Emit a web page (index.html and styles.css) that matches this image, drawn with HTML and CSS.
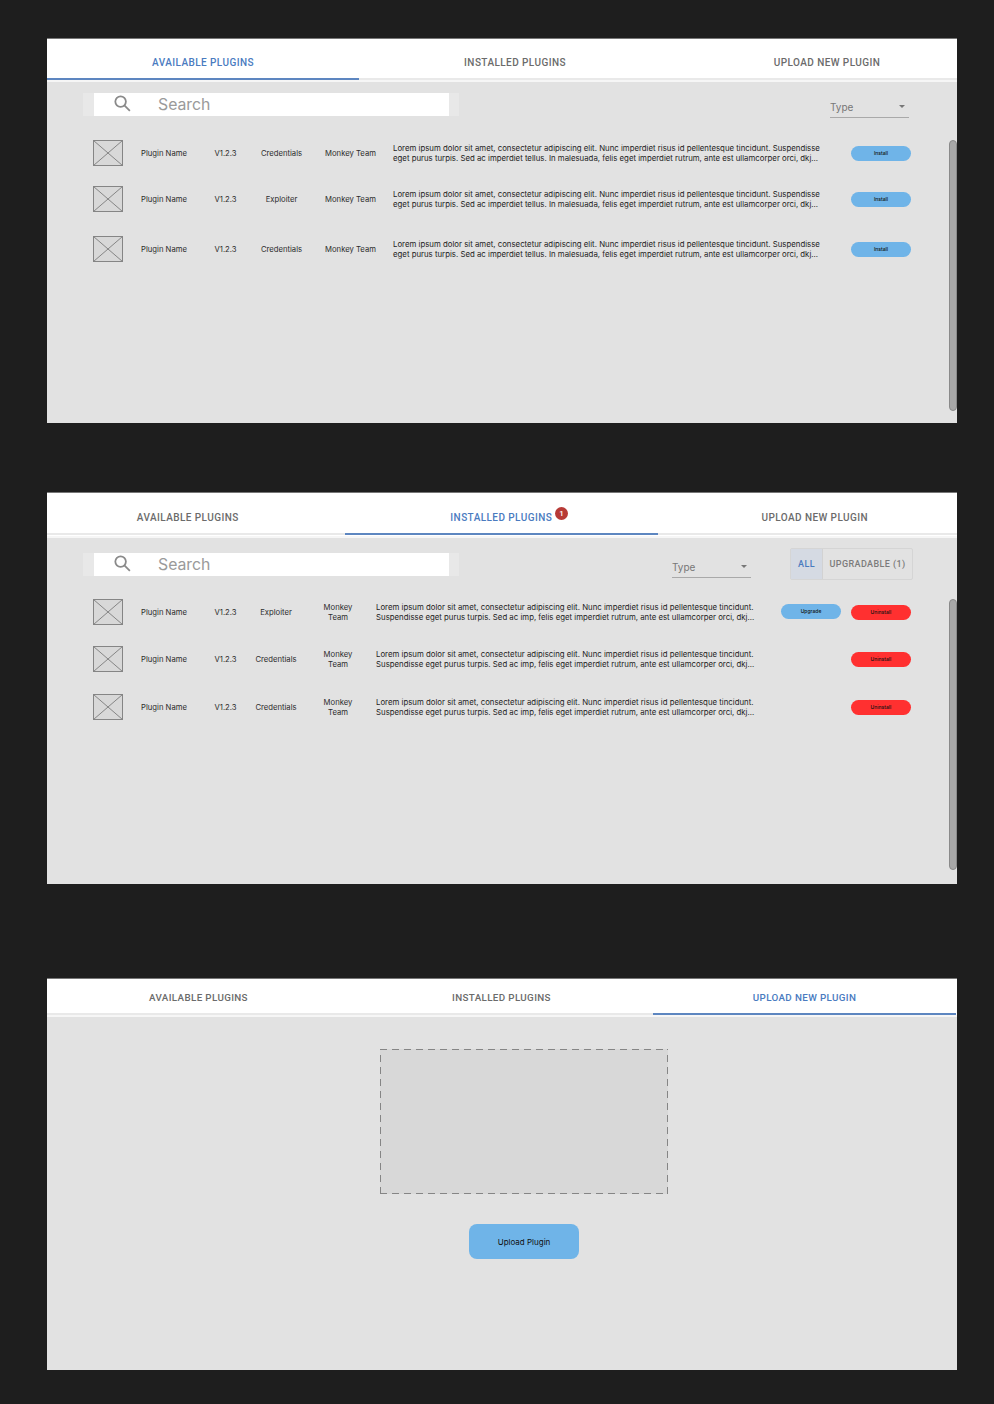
FILE: index.html
```html
<!DOCTYPE html>
<html lang="en">
<head>
<meta charset="utf-8">
<title>Plugins</title>
<link rel="stylesheet" href="styles.css">
</head>
<body>
<section class="panel panel-available">
  <nav class="tabs">
    <a class="tab active">AVAILABLE PLUGINS</a>
    <a class="tab">INSTALLED PLUGINS</a>
    <a class="tab">UPLOAD NEW PLUGIN</a>
  </nav>
  <div class="content">
    <div class="toolbar">
      <div class="search"><div class="search-field">
        <svg class="search-icon" viewBox="0 0 18 18"><circle cx="7" cy="7" r="5.6"/><path d="M11 11l5.8 5.8"/></svg>
        <span>Search</span>
      </div></div>
      <div class="select"><span>Type</span><i class="caret"></i></div>
    </div>
    <div class="rows">
      <div class="row">
        <svg class="thumb" viewBox="0 0 30 26" preserveAspectRatio="none"><rect x=".5" y=".5" width="29" height="25"/><path d="M.5 .5L29.5 25.5M29.5 .5L.5 25.5"/></svg>
        <span class="name">Plugin Name</span><span class="version">V1.2.3</span><span class="type">Credentials</span><span class="team">Monkey Team</span>
        <p class="desc">Lorem ipsum dolor sit amet, consectetur adipiscing elit. Nunc imperdiet risus id pellentesque tincidunt. Suspendisse<br>eget purus turpis. Sed ac imperdiet tellus. In malesuada, felis eget imperdiet rutrum, ante est ullamcorper orci, dkj...</p>
        <a class="pill blue">Install</a>
      </div>
      <div class="row">
        <svg class="thumb" viewBox="0 0 30 26" preserveAspectRatio="none"><rect x=".5" y=".5" width="29" height="25"/><path d="M.5 .5L29.5 25.5M29.5 .5L.5 25.5"/></svg>
        <span class="name">Plugin Name</span><span class="version">V1.2.3</span><span class="type">Exploiter</span><span class="team">Monkey Team</span>
        <p class="desc">Lorem ipsum dolor sit amet, consectetur adipiscing elit. Nunc imperdiet risus id pellentesque tincidunt. Suspendisse<br>eget purus turpis. Sed ac imperdiet tellus. In malesuada, felis eget imperdiet rutrum, ante est ullamcorper orci, dkj...</p>
        <a class="pill blue">Install</a>
      </div>
      <div class="row">
        <svg class="thumb" viewBox="0 0 30 26" preserveAspectRatio="none"><rect x=".5" y=".5" width="29" height="25"/><path d="M.5 .5L29.5 25.5M29.5 .5L.5 25.5"/></svg>
        <span class="name">Plugin Name</span><span class="version">V1.2.3</span><span class="type">Credentials</span><span class="team">Monkey Team</span>
        <p class="desc">Lorem ipsum dolor sit amet, consectetur adipiscing elit. Nunc imperdiet risus id pellentesque tincidunt. Suspendisse<br>eget purus turpis. Sed ac imperdiet tellus. In malesuada, felis eget imperdiet rutrum, ante est ullamcorper orci, dkj...</p>
        <a class="pill blue">Install</a>
      </div>
    </div>
    <div class="scrollbar"></div>
  </div>
</section>

<section class="panel panel-installed">
  <nav class="tabs">
    <a class="tab">AVAILABLE PLUGINS</a>
    <a class="tab active"><span class="tab-label">INSTALLED PLUGINS<b class="badge">1</b></span></a>
    <a class="tab">UPLOAD NEW PLUGIN</a>
  </nav>
  <div class="content">
    <div class="toolbar">
      <div class="search"><div class="search-field">
        <svg class="search-icon" viewBox="0 0 18 18"><circle cx="7" cy="7" r="5.6"/><path d="M11 11l5.8 5.8"/></svg>
        <span>Search</span>
      </div></div>
      <div class="select"><span>Type</span><i class="caret"></i></div>
      <div class="toggle"><span class="toggle-on">ALL</span><span class="toggle-off">UPGRADABLE (1)</span></div>
    </div>
    <div class="rows">
      <div class="row">
        <svg class="thumb" viewBox="0 0 30 26" preserveAspectRatio="none"><rect x=".5" y=".5" width="29" height="25"/><path d="M.5 .5L29.5 25.5M29.5 .5L.5 25.5"/></svg>
        <span class="name">Plugin Name</span><span class="version">V1.2.3</span><span class="type">Exploiter</span><span class="team">Monkey<br>Team</span>
        <p class="desc">Lorem ipsum dolor sit amet, consectetur adipiscing elit. Nunc imperdiet risus id pellentesque tincidunt.<br>Suspendisse eget purus turpis. Sed ac imp, felis eget imperdiet rutrum, ante est ullamcorper orci, dkj...</p>
        <a class="pill blue raised">Upgrade</a>
        <a class="pill red">Uninstall</a>
      </div>
      <div class="row">
        <svg class="thumb" viewBox="0 0 30 26" preserveAspectRatio="none"><rect x=".5" y=".5" width="29" height="25"/><path d="M.5 .5L29.5 25.5M29.5 .5L.5 25.5"/></svg>
        <span class="name">Plugin Name</span><span class="version">V1.2.3</span><span class="type">Credentials</span><span class="team">Monkey<br>Team</span>
        <p class="desc">Lorem ipsum dolor sit amet, consectetur adipiscing elit. Nunc imperdiet risus id pellentesque tincidunt.<br>Suspendisse eget purus turpis. Sed ac imp, felis eget imperdiet rutrum, ante est ullamcorper orci, dkj...</p>
        <span></span>
        <a class="pill red">Uninstall</a>
      </div>
      <div class="row">
        <svg class="thumb" viewBox="0 0 30 26" preserveAspectRatio="none"><rect x=".5" y=".5" width="29" height="25"/><path d="M.5 .5L29.5 25.5M29.5 .5L.5 25.5"/></svg>
        <span class="name">Plugin Name</span><span class="version">V1.2.3</span><span class="type">Credentials</span><span class="team">Monkey<br>Team</span>
        <p class="desc">Lorem ipsum dolor sit amet, consectetur adipiscing elit. Nunc imperdiet risus id pellentesque tincidunt.<br>Suspendisse eget purus turpis. Sed ac imp, felis eget imperdiet rutrum, ante est ullamcorper orci, dkj...</p>
        <span></span>
        <a class="pill red">Uninstall</a>
      </div>
    </div>
    <div class="scrollbar"></div>
  </div>
</section>

<section class="panel panel-upload">
  <nav class="tabs">
    <a class="tab">AVAILABLE PLUGINS</a>
    <a class="tab">INSTALLED PLUGINS</a>
    <a class="tab active">UPLOAD NEW PLUGIN</a>
  </nav>
  <div class="content upload-content">
    <div class="dropzone"></div>
    <a class="upload-button">Upload Plugin</a>
  </div>
</section>
</body>
</html>
```

FILE: styles.css
```css
* { box-sizing: border-box; }

html, body { margin: 0; padding: 0; }

body {
  width: 994px;
  height: 1404px;
  padding: 39px 37px 0 47px;
  background: #1e1e1e;
  font-family: "Inter", "Liberation Sans", sans-serif;
  color: #222;
  overflow: hidden;
}

.panel {
  display: flex;
  flex-direction: column;
  width: 910px;
  overflow: hidden;
  box-shadow: 0 -1px 0 #777;
}

.panel-available { height: 384px; margin-bottom: 70px; }
.panel-installed { height: 391px; margin-bottom: 95px; }
.panel-upload { height: 391px; }

/* Tabs */
.tabs {
  display: flex;
  flex: none;
  background: #fff;
  border-bottom: 2px solid #f6f6f6;
}

.panel-available .tabs { height: 43px; }
.panel-installed .tabs { height: 45px; padding-bottom: 1px; margin-left: -16px; width: 942px; }
.panel-upload .tabs { height: 38px; }

.tab {
  display: flex;
  align-items: center;
  justify-content: center;
  flex: none;
  border-bottom: 2px solid #e9e9e9;
  font-family: "Roboto", "Liberation Sans", sans-serif;
  font-size: 10px;
  font-weight: 500;
  letter-spacing: 0.42px;
  color: #6b6b6b;
}

.panel-available .tab { width: 312px; padding-top: 8px; }
.panel-installed .tab { width: 313.5px; padding-top: 8px; }
.panel-upload .tab { width: 303px; padding-top: 3px; font-size: 9.8px; letter-spacing: 0.36px; }

.tab.active {
  color: #4a7bbf;
  border-bottom-color: #5d86c0;
}

.tab-label { position: relative; }

.badge {
  position: absolute;
  top: -5px;
  right: -16px;
  width: 13px;
  height: 13px;
  border-radius: 50%;
  background: #b73a36;
  color: #fff;
  font-size: 8px;
  font-weight: 500;
  line-height: 13px;
  letter-spacing: 0;
  text-align: center;
}

/* Content area */
.content {
  position: relative;
  flex: 1;
  background: #e2e2e2;
}

.toolbar {
  display: flex;
  align-items: flex-start;
  padding-left: 36px;
}

.panel-available .toolbar { height: 58px; padding-top: 11px; }
.panel-installed .toolbar { height: 61px; padding-top: 10px; }

.search {
  flex: none;
  width: 376px;
  height: 23px;
  padding: 0 10px 0 11px;
  background: #e8e8e8;
}

.panel-installed .search { margin-top: 5px; }

.search-field {
  display: flex;
  align-items: center;
  height: 23px;
  padding-left: 20px;
  background: #fff;
  font-size: 15.8px;
  color: #9a9a9a;
}

.search-icon {
  flex: none;
  width: 17px;
  height: 17px;
  margin: -2px 27px 0 0;
  fill: none;
  stroke: #8a8a8a;
  stroke-width: 1.9;
}

.select {
  display: flex;
  align-items: center;
  justify-content: space-between;
  flex: none;
  width: 79px;
  height: 19px;
  padding: 0 4px 3px 0;
  border-bottom: 1px solid #a9a9a9;
  font-size: 10px;
  color: #777;
}

.panel-available .select { margin: 6px 48px 0 auto; }
.panel-installed .select { margin: 11px 0 0 213px; }

.caret {
  width: 0;
  height: 0;
  border-left: 3.5px solid transparent;
  border-right: 3.5px solid transparent;
  border-top: 3.5px solid #777;
}

.toggle {
  display: flex;
  flex: none;
  width: 123px;
  height: 32px;
  margin-left: 39px;
  border: 1px solid #d5d5d5;
  border-radius: 2px;
  font-family: "Roboto", "Liberation Sans", sans-serif;
  font-size: 9px;
  font-weight: 500;
  letter-spacing: 0.4px;
  line-height: 30px;
}

.toggle-on {
  width: 32px;
  background: #d5dae3;
  border-right: 1px solid #d2d2d2;
  color: #4a7bbf;
  text-align: center;
}

.toggle-off {
  flex: 1;
  color: #7b7b7b;
  text-align: center;
}

/* Rows */
.rows {
  display: flex;
  flex-direction: column;
  padding-left: 46px;
}

.row {
  display: grid;
  align-items: center;
  height: 26px;
  font-size: 7.7px;
  line-height: 9.5px;
  color: #2c2c2c;
  text-align: center;
}

.panel-available .row { grid-template-columns: 48px 61px 47px 65px 73px 6px 458px 60px; }
.panel-installed .row { grid-template-columns: 48px 61px 47px 54px 70px 3px 405px 60px 10px 60px; }

.panel-available .row:nth-child(2) { margin-top: 20px; }
.panel-available .row:nth-child(3) { margin-top: 24px; }
.panel-installed .row:nth-child(2) { margin-top: 21px; }
.panel-installed .row:nth-child(3) { margin-top: 22px; }

.row > span { padding-top: 1px; }

.thumb {
  display: block;
  width: 30px;
  height: 26px;
  fill: #d8d8d8;
  stroke: #858585;
  stroke-width: 1;
}

.name { text-align: left; }

.desc {
  grid-column: 7;
  margin: 0;
  padding-top: 1px;
  font-size: 7.82px;
  line-height: 9.5px;
  color: #222;
  text-align: left;
  white-space: nowrap;
}

.pill {
  display: block;
  height: 15px;
  border-radius: 8px;
  font-size: 5px;
  font-weight: 500;
  line-height: 15px;
  color: #111;
  text-align: center;
}

.blue { background: #6fb4e8; }
.red { background: #ff3030; }
.raised { position: relative; top: -1px; }

.panel-installed .row > span:empty { grid-column: 8; }
.panel-installed .row > .red { grid-column: 10; }

.scrollbar {
  position: absolute;
  top: 58px;
  right: 0;
  width: 8px;
  height: 271px;
  border: 1px solid #8a8a8a;
  border-radius: 4px;
  background: #a8a8a8;
}

.panel-installed .scrollbar { top: 61px; }

/* Upload */
.upload-content {
  display: flex;
  flex-direction: column;
  align-items: flex-start;
  padding: 32px 0 0 333px;
}

.dropzone {
  width: 288px;
  height: 145px;
  background-color: #d8d8d8;
  background-image:
    repeating-linear-gradient(90deg, #858585 0 7px, transparent 7px 12px),
    repeating-linear-gradient(90deg, #858585 0 7px, transparent 7px 12px),
    repeating-linear-gradient(0deg, #858585 0 7px, transparent 7px 12px),
    repeating-linear-gradient(0deg, #858585 0 7px, transparent 7px 12px);
  background-size: 100% 1px, 100% 1px, 1px 100%, 1px 100%;
  background-position: 0 0, 0 100%, 0 0, 100% 0;
  background-repeat: no-repeat;
}

.upload-button {
  display: block;
  width: 110px;
  height: 35px;
  margin: 30px 0 0 89px;
  padding-top: 1px;
  border-radius: 8px;
  background: #6fb4e8;
  font-size: 8px;
  line-height: 35px;
  color: #111;
  text-align: center;
}
```
